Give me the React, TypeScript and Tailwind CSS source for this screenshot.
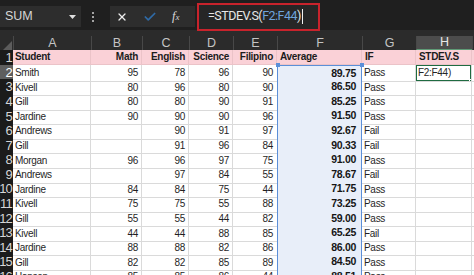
import React from 'react';
import { X, Check } from 'lucide-react';

type Row = { n: number; a: string; b: string; c: string; d: string; e: string; f: string; g: string };

const rows: Row[] = [
  { n: 2, a: 'Smith', b: '95', c: '78', d: '96', e: '90', f: '89.75', g: 'Pass' },
  { n: 3, a: 'Kivell', b: '80', c: '96', d: '80', e: '90', f: '86.50', g: 'Pass' },
  { n: 4, a: 'Gill', b: '80', c: '80', d: '90', e: '91', f: '85.25', g: 'Pass' },
  { n: 5, a: 'Jardine', b: '90', c: '90', d: '90', e: '96', f: '91.50', g: 'Pass' },
  { n: 6, a: 'Andrews', b: '', c: '90', d: '91', e: '97', f: '92.67', g: 'Fail' },
  { n: 7, a: 'Gill', b: '', c: '91', d: '96', e: '84', f: '90.33', g: 'Fail' },
  { n: 8, a: 'Morgan', b: '96', c: '96', d: '97', e: '75', f: '91.00', g: 'Pass' },
  { n: 9, a: 'Andrews', b: '', c: '97', d: '84', e: '55', f: '78.67', g: 'Fail' },
  { n: 10, a: 'Jardine', b: '84', c: '84', d: '75', e: '44', f: '71.75', g: 'Pass' },
  { n: 11, a: 'Kivell', b: '75', c: '75', d: '55', e: '88', f: '73.25', g: 'Pass' },
  { n: 12, a: 'Gill', b: '55', c: '55', d: '44', e: '82', f: '59.00', g: 'Pass' },
  { n: 13, a: 'Kivell', b: '44', c: '44', d: '88', e: '85', f: '65.25', g: 'Fail' },
  { n: 14, a: 'Jardine', b: '88', c: '88', d: '82', e: '86', f: '86.00', g: 'Pass' },
  { n: 15, a: 'Gill', b: '82', c: '82', d: '85', e: '89', f: '84.50', g: 'Pass' },
  { n: 16, a: 'Hansen', b: '85', c: '85', d: '86', e: '44', f: '88.51', g: 'Pass' },
];

const grid = 'grid grid-cols-[13px_78px_51px_47px_44px_44px_85px_54px_56px_2px]';
const cell = 'flex items-center overflow-hidden whitespace-nowrap border-r border-b border-[#dadada]';

const FormulaBar = () => (
  <div className="flex h-[30px] items-center bg-[#1f1f1f] pt-[3px]">
    <div className="flex h-[21px] w-[81px] items-center justify-between bg-[#2d2d2d] pl-[5px] pr-[5px] text-[12.5px] text-[#d6d6d6]">
      <span>SUM</span>
      <svg width="7" height="4" viewBox="0 0 7 4">
        <path d="M0 0h7L3.5 4z" fill="#e0e0e0" />
      </svg>
    </div>
    <div className="flex w-[29px] flex-col items-center gap-[2px] pr-[5px]">
      <span className="h-[2px] w-[2px] rounded-full bg-[#d0d0d0]" />
      <span className="h-[2px] w-[2px] rounded-full bg-[#d0d0d0]" />
      <span className="h-[2px] w-[2px] rounded-full bg-[#d0d0d0]" />
    </div>
    <div className="flex h-[21px] w-[85px] items-center bg-[#2d2d2d] pl-[6px]">
      <X className="h-[12px] w-[12px] text-[#ececec]" strokeWidth={2.6} />
      <Check className="ml-[15px] h-[14px] w-[14px] text-[#2f6aa6]" strokeWidth={3} />
      <span className="ml-[15px] font-['Liberation_Serif',serif] text-[12.5px] italic text-[#dadada]">
        f<span className="text-[9px]">x</span>
      </span>
    </div>
    <div className="ml-[2px] flex h-[28px] w-[123px] items-center border-2 border-[#c8232c] bg-[#262626] pl-[9px] font-['Roboto',sans-serif] text-[12.5px] tracking-[-0.5px] text-[#e6e6e6]">
      <span>=STDEV.S(</span>
      <span className="text-[#6ea3dc]">F2:F44</span>
      <span>)</span>
      <span className="ml-[1px] h-[15px] w-[1px] bg-[#f0f0f0]" />
    </div>
  </div>
);

const ColumnHeaders = () => (
  <>
    <div className="h-[6px] bg-[#2b2b2b]" />
    <div className={`${grid} h-[14px] bg-[#2b2b2b] text-[12.5px] leading-none text-[#c4c4c4]`}>
      <div className="flex items-end justify-end pr-[1px]">
        <svg width="9" height="9" viewBox="0 0 9 9">
          <path d="M9 0v9H0z" fill="#5c5c5c" />
        </svg>
      </div>
      {['A', 'B', 'C', 'D', 'E', 'F', 'G'].map((l) => (
        <div key={l} className="flex items-center justify-center border-l border-[#484848]">
          {l}
        </div>
      ))}
      <div className="flex items-center justify-center border-l border-b border-[#484848] border-b-[#5f9a76] bg-[#4c4c4c] text-[#e8e8e8]">
        H
      </div>
      <div className="border-l border-[#484848]" />
    </div>
  </>
);

const HeaderRow = () => (
  <div className={`${grid} h-[14.6px] bg-[#fad1d7] text-[10px] font-bold tracking-[-0.3px] text-[#1c1c1c]`}>
    <div className="flex items-center justify-end overflow-hidden bg-[#1b1b1b] pr-[1px] text-[13px] font-normal tracking-[-0.8px] text-[#d6d6d6]">
      1
    </div>
    <div className={`${cell} border-[#ebc3c8] pl-[2px]`}>Student</div>
    <div className={`${cell} border-[#ebc3c8] justify-end pr-[3px]`}>Math</div>
    <div className={`${cell} border-[#ebc3c8] justify-end pr-[3px]`}>English</div>
    <div className={`${cell} border-[#ebc3c8] justify-end pr-[3px]`}>Science</div>
    <div className={`${cell} border-[#ebc3c8] justify-end pr-[3px]`}>Filipino</div>
    <div className={`${cell} border-[#ebc3c8] pl-[3px]`}>Average</div>
    <div className={`${cell} border-[#ebc3c8] pl-[3px]`}>IF</div>
    <div className={`${cell} border-[#ebc3c8] pl-[3px]`}>STDEV.S</div>
    <div className="border-b border-[#ebc3c8]" />
  </div>
);

const DataRow = ({ r }: { r: Row }) => {
  const first = r.n === 2;
  return (
    <div className={`${grid} h-[14.6px] bg-white text-[10px] tracking-[-0.3px] text-[#1f1f1f]`}>
      <div
        className={`flex items-center justify-end overflow-hidden border-b border-[#2c2c2c] pr-[1px] text-[13px] tracking-[-0.8px] ${
          first ? 'bg-[#5e5e5e] text-white' : 'bg-[#1b1b1b] text-[#d6d6d6]'
        }`}
      >
        {r.n}
      </div>
      <div className={`${cell} pl-[2px]`}>{r.a}</div>
      <div className={`${cell} justify-end pr-[3px]`}>{r.b}</div>
      <div className={`${cell} justify-end pr-[3px]`}>{r.c}</div>
      <div className={`${cell} justify-end pr-[3px]`}>{r.d}</div>
      <div className="flex items-center justify-end overflow-hidden border-b border-[#dadada] pr-[4px]">{r.e}</div>
      <div
        className={`relative flex items-center justify-end border-x border-b border-x-[#5b8fd8] border-b-[#d3dbe8] bg-[#e8eef9] pr-[5px] text-[10.5px] font-bold text-[#151515] ${
          first ? 'border-t border-t-[#5b8fd8]' : ''
        }`}
      >
        {r.f}
        {first && (
          <>
            <span className="absolute -left-[2.5px] -top-[2.5px] h-[4px] w-[4px] bg-[#5b8fd8]" />
            <span className="absolute -right-[2.5px] -top-[2.5px] h-[4px] w-[4px] bg-[#5b8fd8]" />
          </>
        )}
      </div>
      <div className={`${cell} pl-[2px]`}>{r.g}</div>
      <div className={`${cell} relative pl-[2px]`}>
        {first && (
          <>
            <span className="text-[#262626]">F2:F44)</span>
            <span className="absolute -inset-[1px] border-2 border-[#1f6b41]" />
            <span className="absolute -bottom-[3px] -right-[3px] h-[5px] w-[5px] border border-white bg-[#1f6b41]" />
          </>
        )}
      </div>
      <div className="border-b border-[#dadada]" />
    </div>
  );
};

export default function App() {
  return (
    <div className="h-[275px] w-[474px] overflow-hidden bg-white font-['Liberation_Sans',Arial,sans-serif]">
      <FormulaBar />
      <ColumnHeaders />
      <HeaderRow />
      {rows.map((r) => (
        <DataRow key={r.n} r={r} />
      ))}
    </div>
  );
}
